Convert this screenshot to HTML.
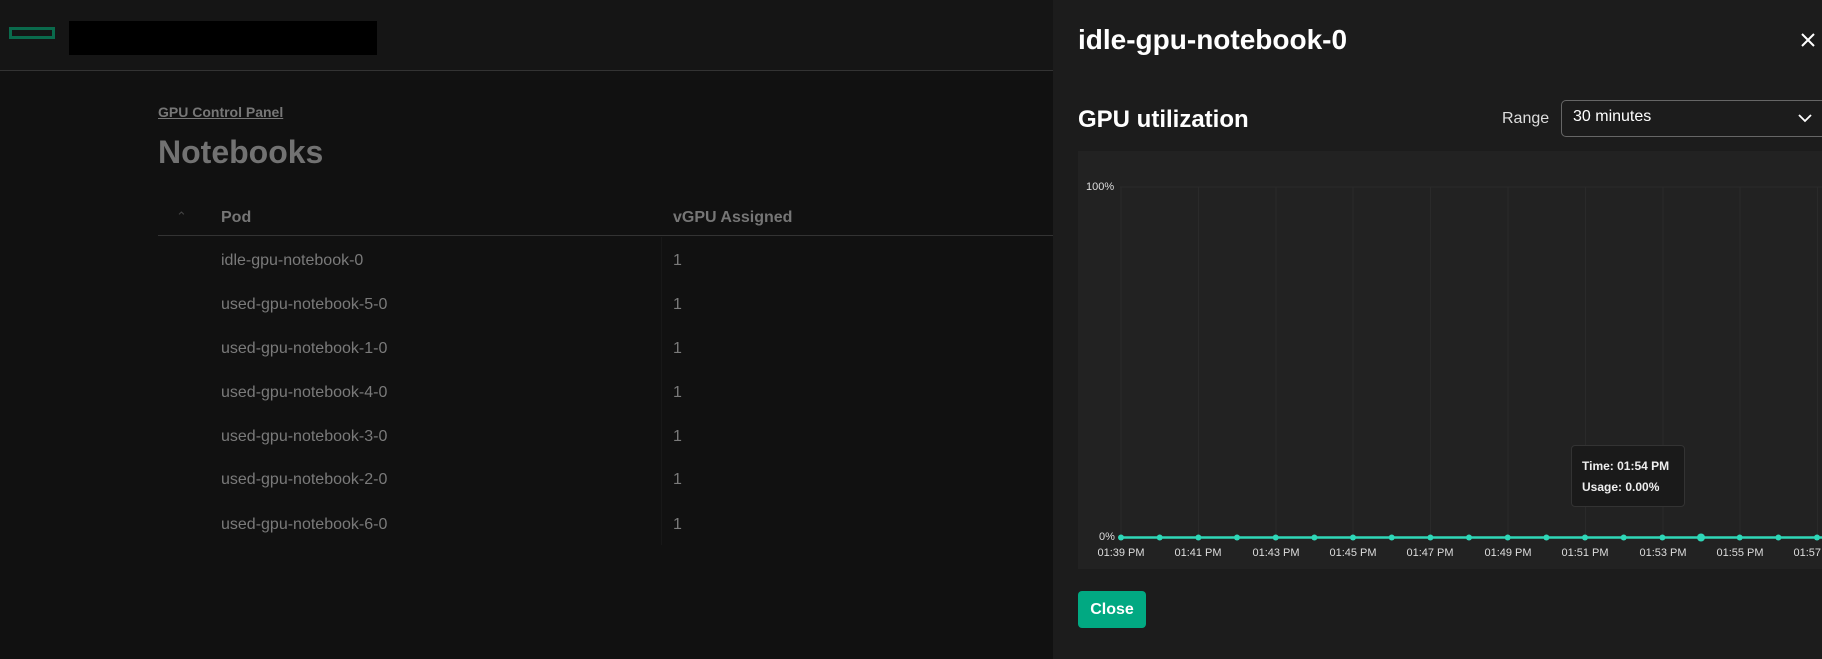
<!DOCTYPE html>
<html><head><meta charset="utf-8"><style>
*{margin:0;padding:0;box-sizing:border-box}
body{width:1822px;height:659px;background:#111;overflow:hidden;position:relative;font-family:"Liberation Sans",sans-serif}
.a{position:absolute;white-space:nowrap}
.hdr{left:0;top:0;width:1053px;height:71px;background:#151515;border-bottom:1px solid #333}
.row{color:#7a7a7a;font-size:16px}
.panel{left:1053px;top:0;width:769px;height:659px;background:#1c1c1c}
.xl{font-size:11px;color:#ddd;transform:translateX(-50%)}
</style></head><body>
<div class="a hdr"></div>
<div class="a" style="left:9px;top:27px;width:46px;height:12px;border:3px solid #0a6a4c"></div>
<div class="a" style="left:69px;top:21px;width:308px;height:34px;background:#000"></div>
<div class="a" style="left:158px;top:104px;font-size:14px;font-weight:bold;color:#777;text-decoration:underline">GPU Control Panel</div>
<div class="a" style="left:158px;top:134px;font-size:32px;font-weight:bold;color:#727272">Notebooks</div>
<div class="a" style="left:176px;top:209px;font-size:13px;color:#444">&#8963;</div>
<div class="a" style="left:221px;top:209px;font-size:16px;font-weight:bold;color:#767676">Pod</div>
<div class="a" style="left:673px;top:209px;font-size:16px;font-weight:bold;color:#767676">vGPU Assigned</div>
<div class="a" style="left:158px;top:235px;width:895px;height:1px;background:#333"></div>
<div class="a" style="left:661px;top:237px;width:1px;height:308px;background:#181818"></div>
<div class="a row" style="left:221px;top:252px">idle-gpu-notebook-0</div><div class="a row" style="left:673px;top:252px">1</div>
<div class="a row" style="left:221px;top:296px">used-gpu-notebook-5-0</div><div class="a row" style="left:673px;top:296px">1</div>
<div class="a row" style="left:221px;top:340px">used-gpu-notebook-1-0</div><div class="a row" style="left:673px;top:340px">1</div>
<div class="a row" style="left:221px;top:384px">used-gpu-notebook-4-0</div><div class="a row" style="left:673px;top:384px">1</div>
<div class="a row" style="left:221px;top:428px">used-gpu-notebook-3-0</div><div class="a row" style="left:673px;top:428px">1</div>
<div class="a row" style="left:221px;top:471px">used-gpu-notebook-2-0</div><div class="a row" style="left:673px;top:471px">1</div>
<div class="a row" style="left:221px;top:516px">used-gpu-notebook-6-0</div><div class="a row" style="left:673px;top:516px">1</div>

<div class="a panel"></div>
<div class="a" style="left:1078px;top:24px;font-size:28px;font-weight:bold;color:#fff">idle-gpu-notebook-0</div>
<svg class="a" style="left:1801px;top:33px" width="14" height="14"><path d="M1 1L13 13M13 1L1 13" stroke="#fff" stroke-width="2"/></svg>
<div class="a" style="left:1078px;top:106px;font-size:24px;font-weight:bold;color:#fff">GPU utilization</div>
<div class="a" style="left:1502px;top:110px;font-size:16px;color:#ddd">Range</div>
<div class="a" style="left:1561px;top:100px;width:280px;height:37px;border:1px solid #666;border-radius:5px;background:#1c1c1c"></div>
<div class="a" style="left:1573px;top:108px;font-size:16px;color:#fff">30 minutes</div>
<svg class="a" style="left:1797px;top:112px" width="16" height="12"><path d="M2 3l6 6 6-6" stroke="#fff" stroke-width="1.8" fill="none"/></svg>
<div class="a" style="left:1078px;top:151px;width:744px;height:418px;background:#222"></div>
<svg class="a" style="left:0;top:0" width="1822" height="659">
<g stroke="#2a2a2a" stroke-width="1">
<line x1="1120" y1="187" x2="1822" y2="187"/>
<line x1="1121" y1="187" x2="1121" y2="537"/><line x1="1198.5" y1="187" x2="1198.5" y2="537"/><line x1="1276" y1="187" x2="1276" y2="537"/><line x1="1353" y1="187" x2="1353" y2="537"/><line x1="1430.5" y1="187" x2="1430.5" y2="537"/><line x1="1508" y1="187" x2="1508" y2="537"/><line x1="1585.5" y1="187" x2="1585.5" y2="537"/><line x1="1663" y1="187" x2="1663" y2="537"/><line x1="1740" y1="187" x2="1740" y2="537"/><line x1="1817.5" y1="187" x2="1817.5" y2="537"/>
</g>
<line x1="1121" y1="537.5" x2="1822" y2="537.5" stroke="#2fd7b8" stroke-width="2.5"/>
<g fill="#2fd7b8">
<circle cx="1121" cy="537.5" r="3"/><circle cx="1159.7" cy="537.5" r="3"/><circle cx="1198.4" cy="537.5" r="3"/><circle cx="1237" cy="537.5" r="3"/><circle cx="1275.7" cy="537.5" r="3"/><circle cx="1314.4" cy="537.5" r="3"/><circle cx="1353" cy="537.5" r="3"/><circle cx="1391.7" cy="537.5" r="3"/><circle cx="1430.4" cy="537.5" r="3"/><circle cx="1469" cy="537.5" r="3"/><circle cx="1507.7" cy="537.5" r="3"/><circle cx="1546.4" cy="537.5" r="3"/><circle cx="1585" cy="537.5" r="3"/><circle cx="1623.7" cy="537.5" r="3"/><circle cx="1662.4" cy="537.5" r="3"/><circle cx="1701" cy="537.5" r="4"/><circle cx="1739.7" cy="537.5" r="3"/><circle cx="1778.4" cy="537.5" r="3"/><circle cx="1817" cy="537.5" r="3"/>
</g>
</svg>
<div class="a" style="left:1086px;top:181px;font-size:11px;color:#ddd">100%</div>
<div class="a" style="left:1099px;top:531px;font-size:11px;color:#ddd">0%</div>
<div class="a xl" style="left:1121px;top:547px">01:39 PM</div>
<div class="a xl" style="left:1198px;top:547px">01:41 PM</div>
<div class="a xl" style="left:1276px;top:547px">01:43 PM</div>
<div class="a xl" style="left:1353px;top:547px">01:45 PM</div>
<div class="a xl" style="left:1430px;top:547px">01:47 PM</div>
<div class="a xl" style="left:1508px;top:547px">01:49 PM</div>
<div class="a xl" style="left:1585px;top:547px">01:51 PM</div>
<div class="a xl" style="left:1663px;top:547px">01:53 PM</div>
<div class="a xl" style="left:1740px;top:547px">01:55 PM</div>
<div class="a xl" style="left:1817px;top:547px">01:57 PM</div>
<div class="a" style="left:1571px;top:445px;width:114px;height:62px;background:#1a1a1a;border:1px solid #333;border-radius:4px"></div>
<div class="a" style="left:1582px;top:459px;font-size:12px;font-weight:bold;color:#eee">Time: 01:54 PM</div>
<div class="a" style="left:1582px;top:480px;font-size:12px;font-weight:bold;color:#eee">Usage: 0.00%</div>
<div class="a" style="left:1078px;top:591px;width:68px;height:37px;background:#01a982;border-radius:4px;color:#fff;font-weight:bold;font-size:16px;text-align:center;line-height:37px">Close</div>
</body></html>
